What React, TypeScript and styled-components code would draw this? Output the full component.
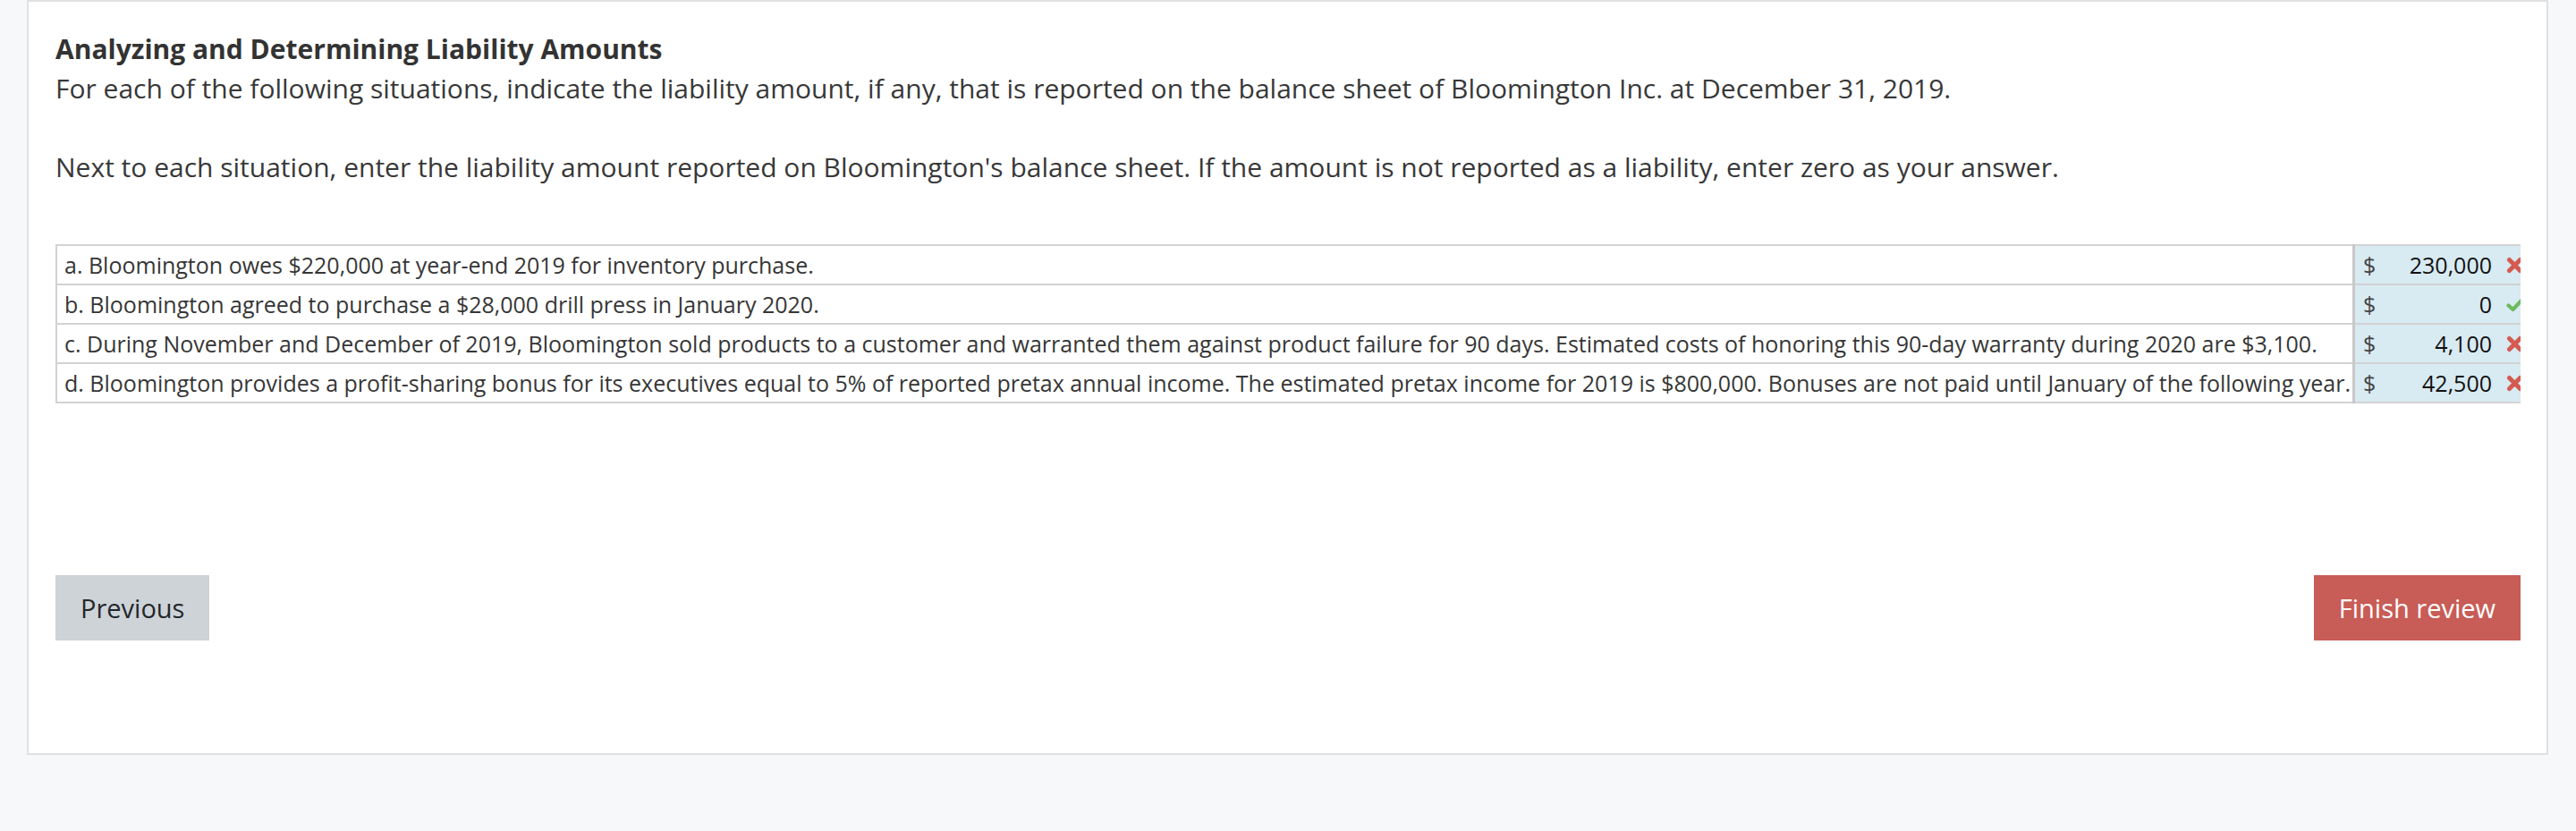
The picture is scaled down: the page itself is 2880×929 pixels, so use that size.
import styled, { createGlobalStyle } from 'styled-components';

const GlobalStyle = createGlobalStyle`
  html, body {
    margin: 0;
    padding: 0;
    background: #f7f8fa;
    font-family: "Open Sans", "Noto Sans", sans-serif;
  }
`;

const Page = styled.div`
  padding: 0 31px 84px 30px;
`;

const Card = styled.div`
  background: #ffffff;
  border: 2px solid #e0e1e3;
  padding: 31px 29px 126px 30px;
`;

const Intro = styled.div`
  font-size: 30px;
  line-height: 44px;
  color: #383838;
`;

const Title = styled.div`
  font-weight: 700;
  color: #333333;
`;

const Spacer = styled.div`
  height: 44px;
`;

const Table = styled.table`
  width: 100%;
  margin-top: 64px;
  border-collapse: collapse;
  font-size: 25px;
  table-layout: fixed;
`;

const Row = styled.tr`
  height: 44px;
`;

const TextCell = styled.td`
  border: 2px solid #d2d2d2;
  padding: 0 8px;
  color: #363636;
  white-space: nowrap;
  overflow: hidden;
`;

const AmountCell = styled.td`
  width: 185px;
  border-top: 2px solid #d2d2d2;
  border-bottom: 2px solid #d2d2d2;
  border-left: 3px solid #c8c8c8;
  background: #d8eaf2;
  padding: 0;
`;

const AmountInner = styled.div`
  display: flex;
  align-items: center;
  height: 42px;
  padding-left: 9px;
  overflow: hidden;
`;

const Currency = styled.span`
  color: #444444;
`;

const Value = styled.span`
  flex: 1;
  text-align: right;
  color: #111111;
`;

const Mark = styled.span<{ $ok: boolean }>`
  display: flex;
  flex-shrink: 0;
  margin-left: 16px;
  margin-right: -3px;
  color: ${p => (p.$ok ? '#6cba5e' : '#d55a50')};
`;

const Actions = styled.div`
  display: flex;
  justify-content: space-between;
  margin-top: 192px;
`;

const Button = styled.button<{ $primary?: boolean }>`
  height: 73px;
  padding: 0 28px;
  border: none;
  border-radius: 0;
  font-family: "Open Sans", "Noto Sans", sans-serif;
  font-size: 29px;
  background: ${p => (p.$primary ? '#c85c56' : '#ced3d7')};
  color: ${p => (p.$primary ? '#ffffff' : '#23272b')};
  cursor: pointer;
`;

function WrongIcon() {
  return (
    <svg width="19" height="19" viewBox="0 0 19 19">
      <path d="M3.5 3.5 L15.5 15.5 M15.5 3.5 L3.5 15.5" stroke="currentColor" strokeWidth="5" strokeLinecap="round" fill="none" />
    </svg>
  );
}

function RightIcon() {
  return (
    <svg width="19" height="19" viewBox="0 0 19 19">
      <path d="M2.5 10.5 L7.5 15 L17.5 4.5" stroke="currentColor" strokeWidth="4.2" strokeLinecap="round" strokeLinejoin="round" fill="none" />
    </svg>
  );
}

const rows = [
  { text: 'a. Bloomington owes $220,000 at year-end 2019 for inventory purchase.', value: '230,000', ok: false },
  { text: 'b. Bloomington agreed to purchase a $28,000 drill press in January 2020.', value: '0', ok: true },
  {
    text: 'c. During November and December of 2019, Bloomington sold products to a customer and warranted them against product failure for 90 days. Estimated costs of honoring this 90-day warranty during 2020 are $3,100.',
    value: '4,100',
    ok: false,
  },
  {
    text: 'd. Bloomington provides a profit-sharing bonus for its executives equal to 5% of reported pretax annual income. The estimated pretax income for 2019 is $800,000. Bonuses are not paid until January of the following year.',
    value: '42,500',
    ok: false,
  },
];

export default function App() {
  return (
    <Page>
      <GlobalStyle />
      <Card>
        <Intro>
          <Title>Analyzing and Determining Liability Amounts</Title>
          <div>
            For each of the following situations, indicate the liability amount, if any, that is reported on the balance sheet of Bloomington Inc. at December 31, 2019.
          </div>
          <Spacer />
          <div>
            Next to each situation, enter the liability amount reported on Bloomington's balance sheet. If the amount is not reported as a liability, enter zero as your answer.
          </div>
        </Intro>
        <Table>
          <tbody>
            {rows.map(r => (
              <Row key={r.text}>
                <TextCell>{r.text}</TextCell>
                <AmountCell>
                  <AmountInner>
                    <Currency>$</Currency>
                    <Value>{r.value}</Value>
                    <Mark $ok={r.ok}>{r.ok ? <RightIcon /> : <WrongIcon />}</Mark>
                  </AmountInner>
                </AmountCell>
              </Row>
            ))}
          </tbody>
        </Table>
        <Actions>
          <Button>Previous</Button>
          <Button $primary>Finish review</Button>
        </Actions>
      </Card>
    </Page>
  );
}
